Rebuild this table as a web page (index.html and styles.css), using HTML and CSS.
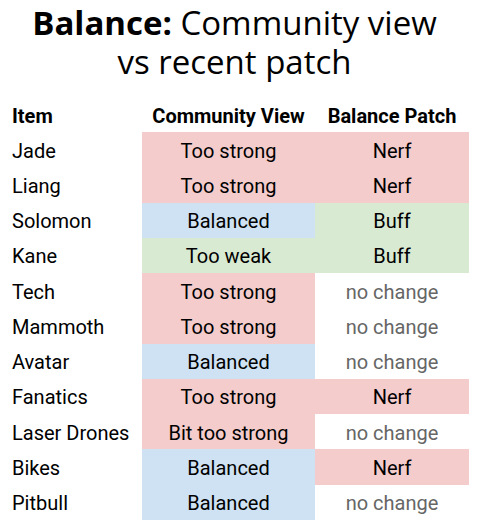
FILE: index.html
```html
<!DOCTYPE html>
<html>
<head>
<meta charset="utf-8">
<link rel="stylesheet" href="styles.css">
</head>
<body>
<div class="page">
  <h1 class="title"><b>Balance:</b> Community view<br>vs recent patch</h1>
  <div class="table">
    <div class="cell head item">Item</div><div class="cell head">Community View</div><div class="cell head">Balance Patch</div>
    <div class="cell item">Jade</div><div class="cell pink">Too strong</div><div class="cell pink">Nerf</div>
    <div class="cell item">Liang</div><div class="cell pink">Too strong</div><div class="cell pink">Nerf</div>
    <div class="cell item">Solomon</div><div class="cell blue">Balanced</div><div class="cell green">Buff</div>
    <div class="cell item">Kane</div><div class="cell green">Too weak</div><div class="cell green">Buff</div>
    <div class="cell item">Tech</div><div class="cell pink">Too strong</div><div class="cell none">no change</div>
    <div class="cell item">Mammoth</div><div class="cell pink">Too strong</div><div class="cell none">no change</div>
    <div class="cell item">Avatar</div><div class="cell blue">Balanced</div><div class="cell none">no change</div>
    <div class="cell item">Fanatics</div><div class="cell pink">Too strong</div><div class="cell pink">Nerf</div>
    <div class="cell item">Laser Drones</div><div class="cell pink">Bit too strong</div><div class="cell none">no change</div>
    <div class="cell item">Bikes</div><div class="cell blue">Balanced</div><div class="cell pink">Nerf</div>
    <div class="cell item">Pitbull</div><div class="cell blue">Balanced</div><div class="cell none">no change</div>
  </div>
</div>
</body>
</html>
```
FILE: styles.css
```css
html, body {
  margin: 0;
  padding: 0;
  background: #fff;
}
.page {
  width: 469px;
  display: flex;
  flex-direction: column;
}
.title {
  margin: 0;
  padding-top: 3px;
  height: 96px;
  box-sizing: border-box;
  font-family: "Open Sans", sans-serif;
  font-weight: 400;
  font-size: 33px;
  line-height: 39px;
  text-align: center;
  color: #000;
}
.title b {
  font-weight: 700;
}
.table {
  display: grid;
  grid-template-columns: 142px 173px 154px;
  grid-template-rows: 36px repeat(11, 35.27px);
  font-family: Roboto, sans-serif;
  font-size: 20px;
  color: #000;
}
.cell {
  display: flex;
  align-items: center;
  justify-content: center;
  white-space: nowrap;
  padding-top: 2px;
  box-sizing: border-box;
}
.cell.item {
  justify-content: flex-start;
  padding-left: 12px;
}
.head {
  font-weight: 700;
  padding-top: 3px;
}
.pink { background: #f4cccc; }
.blue { background: #cfe2f3; }
.green { background: #d9ead3; }
.none { color: #666; }
```
